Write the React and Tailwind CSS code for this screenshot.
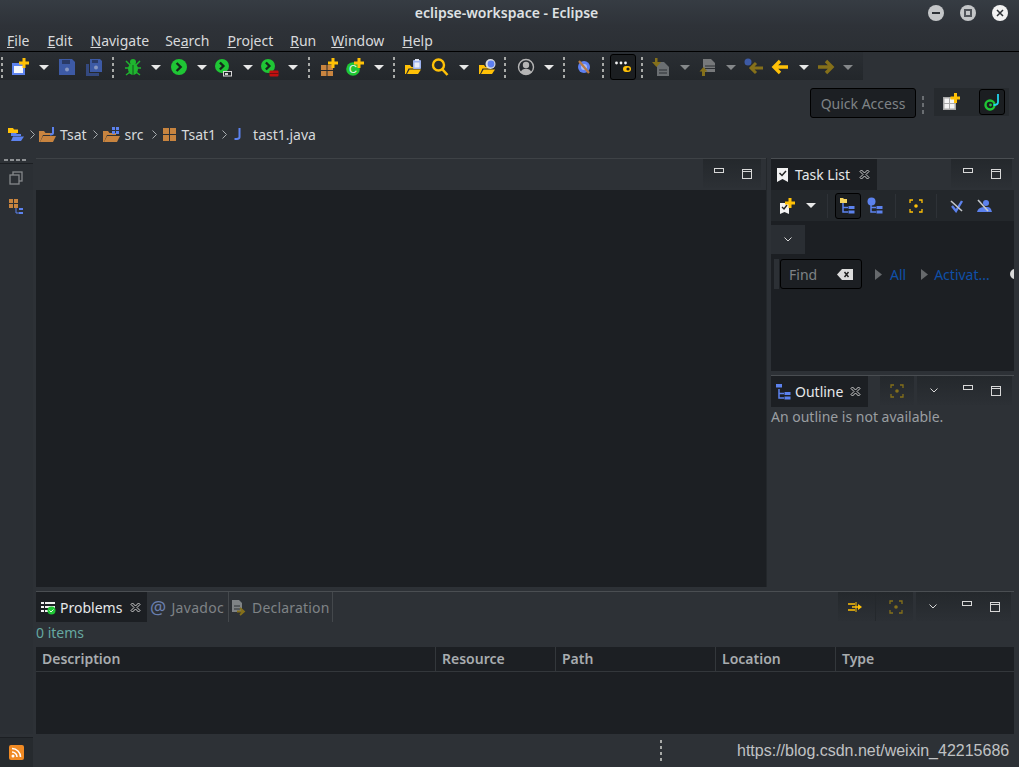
import React from 'react';

function Svg({ children, w = 20, h = 20 }) {
    return <svg width={w} height={h} viewBox={`0 0 ${w} ${h}`} className="block shrink-0">{children}</svg>;
}

const Plus = ({ x, y, c = '#ffc107' }) => (
    <path d={`M${x - 1.5} ${y - 5}h3v3.5h3.5v3h-3.5v3.5h-3v-3.5h-3.5v-3h3.5z`} fill={c} />
);
const Drop = ({ c = '#e8e8e8' }) => (
    <svg width="10" height="5" viewBox="0 0 10 5" className="block shrink-0"><path d="M0 0h10L5 5z" fill={c} /></svg>
);
const Sep = () => (
    <span className="flex flex-col gap-[3px]">
        {[0, 1, 2, 3].map((i) => <span key={i} className="block w-[2px] h-[3px] bg-[#a8aaa8]" />)}
    </span>
);

const NewIcon = () => (
    <Svg><rect x="2" y="6" width="13" height="12" fill="#5c82ee" /><rect x="4" y="9" width="9" height="7" fill="#f4f6fb" /><Plus x={14} y={6} /></Svg>
);
const SaveIcon = ({ c = '#3d5aa5' }) => (
    <Svg><path d="M2 2h13l3 3v13H2z" fill={c} /><rect x="5" y="3" width="8" height="4" fill="#2a3a66" /><circle cx="10" cy="12.5" r="2" fill="#8796c0" /></Svg>
);
const SaveAllIcon = () => (
    <Svg><path d="M2 7h3v9h10v3H2z" fill="#34497f" /><path d="M6 2h10l2 2v11H6z" fill="#3d5aa5" /><rect x="8" y="3" width="6" height="3" fill="#2a3a66" /><circle cx="12" cy="10.5" r="2" fill="#8796c0" /></Svg>
);
const BugIcon = () => (
    <Svg><ellipse cx="10" cy="12" rx="5" ry="6" fill="#1fb52f" /><circle cx="10" cy="5" r="3" fill="#1fb52f" /><path d="M3 4l4 4M17 4l-4 4M2 11h5M18 11h-5M3 18l4-3M17 18l-4-3" stroke="#1fb52f" strokeWidth="1.5" /><path d="M10 8v10" stroke="#15551c" /></Svg>
);
const RunCircle = ({ r = 8, cx = 10, cy = 10 }) => (
    <g><circle cx={cx} cy={cy} r={r} fill="#1fc635" /><path d={`M${cx - r * 0.3} ${cy - r * 0.5}l${r * 0.5} ${r * 0.5}l-${r * 0.5} ${r * 0.5}`} fill="none" stroke="#14281a" strokeWidth="2.4" /></g>
);
const CoverageIcon = () => (
    <Svg><RunCircle r={7} cx={8} cy={9} /><rect x="9.500" y="14.500" width="8" height="4.500" fill="#22262a" stroke="#d5d5d5" /><rect x="11" y="16" width="3" height="2" fill="#d5d5d5" /></Svg>
);
const ExtIcon = () => (
    <Svg><RunCircle r={7} cx={8} cy={9} /><rect x="9.500" y="13.500" width="9" height="6" rx="1" fill="#c01010" /><path d="M9.500 16.500h9" stroke="#701010" /></Svg>
);
const PkgIcon = () => (
    <Svg><path d="M3 8h5.500v5H3zM9.500 8H15v5H9.500zM3 14h5.500v5H3zM9.500 14H15v5H9.500z" fill="#c8843f" /><Plus x={15} y={6} /></Svg>
);
const ClassNewIcon = () => (
    <Svg><circle cx="8" cy="12" r="6.800" fill="#1fc635" /><text x="8" y="16" textAnchor="middle" fontSize="11" fill="#eaf7ea" fontFamily="Liberation Sans, sans-serif">C</text><Plus x={14} y={6} /></Svg>
);
const FolderY = () => (
    <g fill="#ffc107"><path d="M0 6h5l1.500 2H12v1.500H3.500L1 15H0z" /><path d="M4.500 10.500H16L13 15H2z" /></g>
);
const OpenTaskIcon = () => (
    <Svg w={17} h={16}><FolderY /><rect x="8" y="1" width="8" height="9" rx="1" fill="#9db2ef" /><rect x="9.500" y="3.500" width="5" height="5" fill="#e8ecf8" /><rect x="10" y="0" width="4" height="2" fill="#dfe4f5" /></Svg>
);
const SearchIcon = () => (
    <Svg w={18} h={18}><circle cx="7.500" cy="7" r="5.500" fill="none" stroke="#ffc107" strokeWidth="2.400" /><path d="M11.500 11.500l5 5.500" stroke="#ffc107" strokeWidth="2.600" /></Svg>
);
const OpenWebIcon = () => (
    <Svg w={17} h={16}><FolderY /><circle cx="11.500" cy="5" r="5" fill="#d7dbe0" /><circle cx="12" cy="5" r="3.400" fill="#5d7ff0" /></Svg>
);
const UserIcon = () => (
    <Svg w={18} h={18}><circle cx="9" cy="9" r="7.500" fill="none" stroke="#b5b5b5" strokeWidth="1.400" /><circle cx="9" cy="7" r="3.200" fill="#b5b5b5" /><path d="M3.500 14.500c1-3 3-3.800 5.500-3.800s4.500.8 5.500 3.800a7.500 7.500 0 0 1-11 0z" fill="#b5b5b5" /></Svg>
);
const GlobeIcon = () => (
    <Svg w={14} h={14}><circle cx="7" cy="7" r="6" fill="#5d7ff0" /><circle cx="7" cy="7" r="3" fill="#a9bbf5" /><path d="M2 1l10 12" stroke="#b87a45" strokeWidth="2.200" /></Svg>
);
const DotsToggleIcon = () => (
    <Svg w={16} h={12}>
        <circle cx="1.500" cy="2" r="1.400" fill="#f2f2f2" /><circle cx="6" cy="2" r="1.400" fill="#f2f2f2" /><circle cx="10.500" cy="2" r="1.400" fill="#f2f2f2" />
        <rect x="8" y="5" width="8" height="6" rx="3" fill="#ffc107" /><circle cx="13" cy="8" r="1.600" fill="#1a1c1e" />
    </Svg>
);
const DocDownIcon = () => (
    <Svg><path d="M6 5h7l5 5v9H6z" fill="#6b6f72" /><path d="M8 13h8M8 16h8" stroke="#2d3034" /><path d="M4 1h2.500v4H10l-4.500 5L1 5h3z" fill="#85701a" /></Svg>
);
const DocUpIcon = () => (
    <Svg><path d="M5 2h8l4 4v9H5z" fill="#77797b" /><path d="M7 9h10M7 11.500h10" stroke="#2d3034" /><path d="M1.500 14.500l4-4.500 4 4.500H7V19H4v-4.500z" fill="#85701a" /></Svg>
);
const BackDotIcon = () => (
    <Svg w={22}><circle cx="5" cy="5" r="3.500" fill="#3d5aa5" /><path d="M13 6l-5 5 5 5M8 11h12" fill="none" stroke="#85701a" strokeWidth="3" /></Svg>
);
const ArrowL = ({ c = '#ffc107' }) => (
    <Svg w={18} h={16}><path d="M9 2L3 8l6 6M3 8h14" fill="none" stroke={c} strokeWidth="3.400" /></Svg>
);
const ArrowR = ({ c = '#85701a' }) => (
    <Svg w={18} h={16}><path d="M9 2l6 6-6 6M15 8H1" fill="none" stroke={c} strokeWidth="3.400" /></Svg>
);
const PerspNew = () => (
    <Svg w={18} h={18}><rect x="1" y="4" width="13" height="13" fill="#a9a9a9" /><path d="M2.500 5.500h4.500V10H2.500zM8 5.500h4.500V10H8zM2.500 11h4.500v4.500H2.500zM8 11h4.500v4.500H8z" fill="#f4f4f4" /><Plus x={13.500} y={5} /></Svg>
);
const JavaPersp = () => (
    <Svg w={18} h={18}><circle cx="7" cy="12" r="4.500" fill="none" stroke="#1fc635" strokeWidth="2.400" /><circle cx="7.500" cy="12" r="1.400" fill="#1fc635" /><path d="M15 1v8c0 2-1.500 3-4.500 3" fill="none" stroke="#22d3ee" strokeWidth="1.800" /></Svg>
);
const MinBtn = () => <span className="block w-[10px] h-[5px] border border-[#d8d8d8]" />;
const MaxBtn = () => (
    <span className="block w-[10px] h-[10px] border border-[#d8d8d8] relative">
        <span className="absolute left-0 right-0 top-[1px] h-px bg-[#d8d8d8]" />
    </span>
);
const Chevron = () => (
    <svg width="8" height="5" viewBox="0 0 8 5" className="block"><path d="M0.500 0.500L4 4l3.500-3.500" fill="none" stroke="#d8d8d8" /></svg>
);
const CloseX = () => (
    <svg width="11" height="11" viewBox="0 0 11 11" className="block shrink-0"><path d="M1 2.500L2.500 1 5.500 4 8.500 1 10 2.500 7 5.500 10 8.500 8.500 10 5.500 7 2.500 10 1 8.500 4 5.500z" fill="none" stroke="#d0d0d0" /></svg>
);
const HierIcon = ({ top }) => (
    <Svg w={18} h={17}>
        {top}
        <path d="M4 6v9h5M4 10.500h5" fill="none" stroke="#5c82ee" strokeWidth="1.500" />
        <rect x="9.500" y="9" width="6" height="3" fill="#5c82ee" /><rect x="9.500" y="13.500" width="6" height="3" fill="#5c82ee" />
    </Svg>
);
const FocusIcon = ({ c = '#ffc107' }) => (
    <Svg w={14} h={14}><path d="M1 4V1h3M10 1h3v3M13 10v3h-3M4 13H1v-3" fill="none" stroke={c} strokeWidth="1.300" /><circle cx="7" cy="7" r="1.800" fill={c} /></Svg>
);
const SmallTri = () => (
    <svg width="7" height="11" viewBox="0 0 7 11" className="shrink-0"><path d="M0 0l7 5.500L0 11z" fill="#66696c" /></svg>
);

function Cell({ className, children }) {
    return <span className={`flex items-center justify-center shrink-0 h-full ${className}`}>{children}</span>;
}

function Toolbar() {
    return (
        <div className="h-[28px] shrink-0 w-[863px] flex items-center pt-[2px] bg-gradient-to-b from-[#2a2e33] to-[#23272b]">
            <Cell className="w-[3px]"><Sep /></Cell>
            <Cell className="w-[34px]"><NewIcon /></Cell>
            <Cell className="w-[14px]"><Drop /></Cell>
            <Cell className="w-[32px]"><SaveIcon /></Cell>
            <Cell className="w-[22px]"><SaveAllIcon /></Cell>
            <Cell className="w-[16px]"><Sep /></Cell>
            <Cell className="w-[24px]"><BugIcon /></Cell>
            <Cell className="w-[22px]"><Drop /></Cell>
            <Cell className="w-[24px]"><Svg><RunCircle /></Svg></Cell>
            <Cell className="w-[22px]"><Drop /></Cell>
            <Cell className="w-[22px]"><CoverageIcon /></Cell>
            <Cell className="w-[26px]"><Drop /></Cell>
            <Cell className="w-[18px]"><ExtIcon /></Cell>
            <Cell className="w-[28px]"><Drop /></Cell>
            <Cell className="w-[4px]"><Sep /></Cell>
            <Cell className="w-[34px]"><PkgIcon /></Cell>
            <Cell className="w-[20px]"><ClassNewIcon /></Cell>
            <Cell className="w-[28px]"><Drop /></Cell>
            <Cell className="w-[2px]"><Sep /></Cell>
            <Cell className="w-[36px]"><OpenTaskIcon /></Cell>
            <Cell className="w-[18px]"><SearchIcon /></Cell>
            <Cell className="w-[30px]"><Drop /></Cell>
            <Cell className="w-[16px]"><OpenWebIcon /></Cell>
            <Cell className="w-[20px]"><Sep /></Cell>
            <Cell className="w-[22px]"><UserIcon /></Cell>
            <Cell className="w-[24px]"><Drop /></Cell>
            <Cell className="w-[6px]"><Sep /></Cell>
            <Cell className="w-[34px]"><GlobeIcon /></Cell>
            <Cell className="w-[4px]"><Sep /></Cell>
            <Cell className="w-[36px]">
                <span className="flex items-center justify-center w-[26px] h-[26px] rounded-[3px] bg-[#1b1e21] border border-black"><DotsToggleIcon /></span>
            </Cell>
            <Cell className="w-[2px]"><Sep /></Cell>
            <Cell className="w-[36px]"><DocDownIcon /></Cell>
            <Cell className="w-[12px]"><Drop c="#85888a" /></Cell>
            <Cell className="w-[34px]"><DocUpIcon /></Cell>
            <Cell className="w-[12px]"><Drop c="#85888a" /></Cell>
            <Cell className="w-[34px]"><BackDotIcon /></Cell>
            <Cell className="w-[18px]"><ArrowL /></Cell>
            <Cell className="w-[30px]"><Drop /></Cell>
            <Cell className="w-[14px]"><ArrowR /></Cell>
            <Cell className="w-[30px]"><Drop c="#85888a" /></Cell>
        </div>
    );
}

const Crumb = () => (
    <svg width="5" height="9" viewBox="0 0 5 9" className="block shrink-0"><path d="M0.500 0.500L4.500 4.500 0.500 8.500" fill="none" stroke="#a8acaf" /></svg>
);
const OrangeFolder = ({ children }) => (
    <Svg w={18} h={16}>
        <path d="M0 5h5l1.500 2H13v2H4L1 16H0z" fill="#c8843f" /><path d="M4 10h13l-3 6H1z" fill="#c8843f" />
        {children}
    </Svg>
);

function Breadcrumb() {
    return (
        <div className="h-[28px] shrink-0 flex items-center pl-[8px] text-[14px] text-[#d8dadc]">
            <Svg w={17} h={16}>
                <path d="M0 2h5l1 1.500h4V7H0z" fill="#ffc107" /><path d="M3 7h5l1 1h4v2H3z" fill="#5c82ee" /><path d="M5 10.500h11l-3 4.500H3z" fill="#5c82ee" />
            </Svg>
            <span className="ml-[5px] mr-[4px]"><Crumb /></span>
            <OrangeFolder><path d="M15 1v6c0 1.500-1 2.500-4 2.500v-2c2 0 2-.5 2-1V1z" fill="#5c82ee" /></OrangeFolder>
            <span className="ml-[3px]">Tsat</span>
            <span className="ml-[6px] mr-[5px]"><Crumb /></span>
            <OrangeFolder><path d="M9 1h3v3H9zM13 1h3v3h-3zM13 5h3v3h-3zM9 5h3v3H9z" fill="#5c82ee" /></OrangeFolder>
            <span className="ml-[4px]">src</span>
            <span className="ml-[8px] mr-[6px]"><Crumb /></span>
            <Svg w={14} h={13}><path d="M0 0h6v6H0zM7 0h6v6H7zM0 7h6v6H0zM7 7h6v6H7z" fill="#c8843f" /></Svg>
            <span className="ml-[5px]">Tsat1</span>
            <span className="ml-[6px] mr-[6px]"><Crumb /></span>
            <Svg w={9} h={14}><path d="M5.500 1h2v9c0 2.500-2 3-6 3v-2c3 0 4-.3 4-1z" fill="#5c82ee" /></Svg>
            <span className="ml-[11px]">tast1.java</span>
        </div>
    );
}

function Tab({ active, icon, label, close, gap = 'ml-[7px]', className }) {
    return (
        <div className={`h-full flex items-center shrink-0 ${active ? 'bg-[#1c1f23] text-[#e6e8ea]' : 'text-[#7f8386] border-r border-[#44484c]'} ${className}`}>
            {icon}
            <span>{label}</span>
            {close && <span className={gap}><CloseX /></span>}
        </div>
    );
}

function WinCtl() {
    return (
        <div className="h-[29px] flex items-center">
            <span className="w-[28px] flex justify-center -mt-[6px]"><MinBtn /></span>
            <span className="w-[28px] flex justify-center"><MaxBtn /></span>
        </div>
    );
}

const boxGrad = 'bg-gradient-to-b from-[#24282c] to-[#2c3035]';

function RightPanel() {
    return (
        <div className="w-[243px] shrink-0 flex flex-col text-[14px]">
            <div className="h-[32px] border-t border-[#4a4e52] flex justify-between">
                <Tab active className="w-[106px] pl-[5px]" gap="ml-[9px]" label="Task List" close icon={
                    <span className="mr-[6px]">
                        <Svg w={13} h={16}><path d="M1 1h11v14l-5.500-3L1 15z" fill="#f2f2f2" /><path d="M3.500 6l2.500 2.500L10 4" fill="none" stroke="#222" strokeWidth="1.500" /></Svg>
                    </span>
                } />
                <div className={`h-[29px] pl-[3px] pr-[2px] mr-[2px] ${boxGrad}`}><WinCtl /></div>
            </div>
            <div className="h-[31px] shrink-0 bg-[#23272b] flex items-center">
                <span className="ml-[8px]">
                    <Svg w={16} h={16}><path d="M1 5h9v11l-4.500-2L1 16z" fill="#f2f2f2" /><path d="M3 9l2 2 3-4" fill="none" stroke="#222" strokeWidth="1.400" /><Plus x={11} y={5} /></Svg>
                </span>
                <span className="ml-[11px]"><Drop /></span>
                <span className="ml-[11px] w-px h-[24px] bg-[#2e3237]" />
                <span className="ml-[7px] w-[26px] h-[26px] flex items-center justify-center rounded-[3px] bg-[#1b1e21] border border-black">
                    <HierIcon top={<path d="M1 1h3l1 1h3v4H1z" fill="#f4d35e" />} />
                </span>
                <span className="ml-[6px]"><HierIcon top={<circle cx="4.500" cy="4.500" r="4" fill="#5c82ee" />} /></span>
                <span className="ml-[10px] w-px h-[24px] bg-[#2e3237]" />
                <span className="ml-[13px]"><FocusIcon /></span>
                <span className="ml-[13px] w-px h-[24px] bg-[#2e3237]" />
                <span className="ml-[12px]">
                    <Svg w={16} h={14}><path d="M3 7l4 5 6-10" fill="none" stroke="#5c82ee" strokeWidth="2.400" /><path d="M2 2l11 10" stroke="#c5c8cc" strokeWidth="1.600" /></Svg>
                </span>
                <span className="ml-[11px]">
                    <Svg w={16} h={14}><circle cx="10" cy="4" r="3" fill="#5c82ee" /><path d="M1 13c1-4 4-5 9-5s5 2 6 5z" fill="#5c82ee" /><path d="M2 1l10 11" stroke="#c5c8cc" strokeWidth="1.600" /></Svg>
                </span>
            </div>
            <div className="h-[150px] shrink-0 bg-[#1c1f23] flex flex-col overflow-hidden">
                <div className="w-[34px] h-[29px] mt-[4px] bg-[#2a2e33] flex items-center justify-center"><Chevron /></div>
                <div className="mt-[5px] flex items-center h-[30px] whitespace-nowrap">
                    <span className="ml-[3px] w-[5px] h-[30px] bg-[#2c3035] shrink-0" />
                    <div className="ml-[1px] w-[82px] h-[30px] shrink-0 rounded-[3px] bg-[#1c1f23] border border-black flex items-center justify-between pl-[8px] pr-[8px] text-[#7f8386]">
                        <span>Find</span>
                        <Svg w={16} h={11}><path d="M0 5.500L5 0h11v11H5z" fill="#dcdcdc" /><path d="M7.500 3l4 5M11.500 3l-4 5" stroke="#222" strokeWidth="1.500" /></Svg>
                    </div>
                    <span className="ml-[13px] shrink-0"><SmallTri /></span>
                    <span className="ml-[8px] shrink-0 text-[#0f4fa8]">All</span>
                    <span className="ml-[15px] shrink-0"><SmallTri /></span>
                    <span className="ml-[6px] shrink-0 text-[#0f4fa8]">Activat...</span>
                    <span className="ml-[20px] block w-[8px] h-[10px] rounded-l-full bg-[#d8d8d8] shrink-0" />
                </div>
            </div>
            <div className="h-[4px] shrink-0" />
            <div className="h-[32px] shrink-0 border-t border-[#4a4e52] flex">
                <Tab active className="w-[97px] pl-[4px]" label="Outline" close icon={
                    <span className="mr-[2px]"><HierIcon top={<rect x="1" y="1" width="6" height="3.500" fill="#5c82ee" />} /></span>
                } />
                <div className={`ml-[12px] w-[34px] h-[29px] flex items-center justify-center ${boxGrad}`}><FocusIcon c="#85701a" /></div>
                <div className={`ml-[3px] h-[29px] flex items-center pl-[13px] pr-[2px] ${boxGrad}`}>
                    <Chevron />
                    <span className="w-[16px]" />
                    <WinCtl />
                </div>
            </div>
            <div className="text-[#9a9ea1] leading-[20px]">An outline is not available.</div>
        </div>
    );
}

function BottomPanel() {
    const cols = [
        ['Description', 'w-[400px]'],
        ['Resource', 'w-[120px]'],
        ['Path', 'w-[160px]'],
        ['Location', 'w-[120px]'],
        ['Type', 'flex-1'],
    ];
    return (
        <div className="flex-1 flex flex-col mt-[4px] text-[14px]">
            <div className="h-[31px] shrink-0 border-t border-[#4a4e52] flex pr-[3px]">
                <Tab active className="w-[111px] pl-[5px]" gap="ml-[8px]" label="Problems" close icon={
                    <span className="mr-[4px]">
                        <Svg w={15} h={16}><path d="M0 3h3v2H0zM4 3h10v2H4zM0 7h3v2H0zM4 7h10v2H4zM0 11h3v2H0zM4 11h4v2H4z" fill="#f0f0f0" /><circle cx="10.500" cy="11.500" r="4" fill="#1fc635" /><path d="M8.500 11.500l1.500 1.500 2.500-2.500" fill="none" stroke="#e8f8e8" /></Svg>
                    </span>
                } />
                <Tab className="w-[82px] pl-[3px] tracking-[0.3px]" label="Javadoc" icon={
                    <span className="mr-[5px] text-[#6a7fae] text-[18px] leading-none">@</span>
                } />
                <Tab className="w-[104px] pl-[2px] tracking-[0.2px]" label="Declaration" icon={
                    <span className="mr-[5px]">
                        <Svg w={16} h={17}><path d="M1 1h7l3 3v9H1z" fill="#7f8386" /><path d="M3 7h6M3 10h6" stroke="#2d3034" /><path d="M9 9l4 3.500-4 3.500M6 12.500h7" fill="none" stroke="#85701a" strokeWidth="1.800" /></Svg>
                    </span>
                } />
                <div className="flex-1" />
                <div className={`w-[38px] h-[29px] flex items-center justify-center pr-[3px] border-r border-[#24282c] ${boxGrad}`}>
                    <Svg w={14} h={12}><path d="M0 3h7M0 9h7M4 6h8" stroke="#ffc107" strokeWidth="1.500" /><path d="M8 1v10" stroke="#ffc107" /><path d="M10 3l4 3-4 3z" fill="#ffc107" /></Svg>
                </div>
                <div className={`w-[37px] h-[29px] flex items-center justify-center pl-[3px] ${boxGrad}`}><FocusIcon c="#85701a" /></div>
                <div className={`ml-[3px] w-[95px] h-[29px] flex items-center pl-[13px] ${boxGrad}`}>
                    <Chevron />
                    <span className="w-[16px]" />
                    <WinCtl />
                </div>
            </div>
            <div className="h-[25px] shrink-0 text-[#66a8a0] leading-[21px]">0 items</div>
            <div className="h-[25px] shrink-0 bg-[#1c1f23] border-b border-[#33373b] flex font-semibold text-[#a8acaf]">
                {cols.map(([name, w]) => (
                    <div key={name} className={`${w} pl-[6px] pb-[2px] flex items-center border-r border-[#33373b] last:border-r-0`}>{name}</div>
                ))}
            </div>
            <div className="flex-1 bg-[#1c1f23]" />
        </div>
    );
}

export default function App() {
    return (
        <div className="w-[1019px] h-[767px] overflow-hidden bg-[#2d3136] flex flex-col font-['Noto_Sans',sans-serif]">
            <div className="h-[26px] shrink-0 bg-gradient-to-b from-[#363c43] to-[#2e3238] flex items-center relative">
                <div className="flex-1 text-center text-[14px] font-semibold text-[#dfe1e3] pr-[6px] -mt-[2px]">eclipse-workspace - Eclipse</div>
                <div className="flex items-center absolute right-[11px] top-[5px] gap-[16px]">
                    <span className="w-[16px] h-[16px] rounded-full bg-[#c4c6c8] flex items-center justify-center"><span className="block w-[8px] h-[2px] bg-[#2d3136]" /></span>
                    <span className="w-[16px] h-[16px] rounded-full bg-[#c4c6c8] flex items-center justify-center"><span className="block w-[8px] h-[8px] border-2 border-[#50545a]" /></span>
                    <span className="w-[16px] h-[16px] rounded-full bg-[#f2f2f2] flex items-center justify-center">
                        <svg width="8" height="8" viewBox="0 0 8 8" className="block"><path d="M1 1l6 6M7 1L1 7" stroke="#2d3136" strokeWidth="1.500" /></svg>
                    </span>
                </div>
            </div>
            <div className="h-[26px] shrink-0 bg-gradient-to-b from-[#2e3238] to-[#2b2f34] border-b border-black flex items-center pl-[7px] pt-[3px] gap-[17px] text-[14px] text-[#d8dadc]">
                <span><u>F</u>ile</span>
                <span className="ml-[1px]"><u>E</u>dit</span>
                <span className="ml-[1px]"><u>N</u>avigate</span>
                <span className="-ml-[1px]">Se<u>a</u>rch</span>
                <span className="ml-[1px]"><u>P</u>roject</span>
                <span><u>R</u>un</span>
                <span className="-ml-[2px]"><u>W</u>indow</span>
                <span className="ml-[1px]"><u>H</u>elp</span>
            </div>
            <Toolbar />
            <div className="h-[40px] shrink-0 flex items-start justify-end pt-[8px] pr-[10px]">
                <div className="w-[106px] h-[30px] rounded-[3px] bg-[#1c1f23] border border-black flex items-center justify-center text-[14px] text-[#7f8386]">Quick Access</div>
                <span className="ml-[6px] mr-[10px] mt-[8px] flex flex-col gap-[3px]">
                    {[0, 1, 2].map((i) => <span key={i} className="block w-[2px] h-[4px] bg-[#6a6e72]" />)}
                </span>
                <div className="h-[28px] w-[75px] bg-[#262a2e] flex items-center pl-[8px] gap-[19px]">
                    <PerspNew />
                    <span className="w-[26px] h-[26px] rounded-[3px] bg-[#1b1e21] border border-black flex items-center justify-center"><JavaPersp /></span>
                </div>
            </div>
            <Breadcrumb />
            <div className="h-[10px] shrink-0" />
            <div className="flex-1 flex min-h-0">
                <div className="w-[33px] shrink-0 flex flex-col">
                    <div className="h-[5px] flex gap-[2px] pl-[4px] pt-[1px]">
                        {[0, 1, 2, 3].map((i) => <span key={i} className="block w-[4px] h-[2px] bg-[#8f9295]" />)}
                    </div>
                    <div className="flex-1 border-t border-[#1c1f23] bg-[#2b2f34] flex flex-col items-center pt-[7px] gap-[13px] pr-[1px]">
                        <Svg w={14} h={14}><rect x="4" y="1" width="9" height="9" fill="none" stroke="#85888a" strokeWidth="1.300" /><rect x="1" y="4" width="9" height="9" fill="#2b2f34" stroke="#85888a" strokeWidth="1.300" /></Svg>
                        <Svg w={17} h={18}><path d="M1 1h4v4H1zM6 1h4v4H6zM1 6h4v4H1zM6 6h4v4H6z" fill="#c8843f" /><path d="M8 10v5h3" fill="none" stroke="#5c82ee" /><path d="M11 10h4v2h-4zM11 14h4v2h-4z" fill="#5c82ee" /></Svg>
                    </div>
                </div>
                <div className="flex-1 flex flex-col pl-[3px] min-w-0">
                    <div className="flex h-[429px] shrink-0">
                        <div className="w-[731px] shrink-0 flex flex-col border-r border-[#23272b]">
                            <div className="h-[32px] shrink-0 border-t border-[#3e4246] flex justify-end pr-[5px]">
                                <div className={`pl-[2px] ${boxGrad} h-[29px]`}><WinCtl /></div>
                            </div>
                            <div className="flex-1 bg-[#1c1f23]" />
                        </div>
                        <div className="w-[4px] shrink-0" />
                        <RightPanel />
                    </div>
                    <BottomPanel />
                </div>
                <div className="w-[5px] shrink-0" />
            </div>
            <div className="h-[33px] shrink-0 flex items-center">
                <div className="w-[33px] h-[30px] self-end bg-[#262a2e] border-t border-[#1c1f23] flex items-center justify-center">
                    <span className="w-[15px] h-[15px] rounded-[2px] bg-[#f08a24] flex items-center justify-center">
                        <svg width="11" height="11" viewBox="0 0 11 11" className="block"><circle cx="2" cy="9" r="1.500" fill="#fff" /><path d="M1 5a5 5 0 0 1 5 5M1 1.500a8.500 8.500 0 0 1 8.500 8.500" fill="none" stroke="#fff" strokeWidth="1.600" /></svg>
                    </span>
                </div>
                <span className="ml-[627px] flex flex-col gap-[3px]">
                    {[0, 1, 2, 3].map((i) => <span key={i} className="block w-[2px] h-[3px] bg-[#a8aaa8]" />)}
                </span>
                <span className="ml-[75px] text-[16px] text-[#c0c2c4] font-['Liberation_Sans',sans-serif]">https://blog.csdn.net/weixin_42215686</span>
            </div>
        </div>
    );
}
